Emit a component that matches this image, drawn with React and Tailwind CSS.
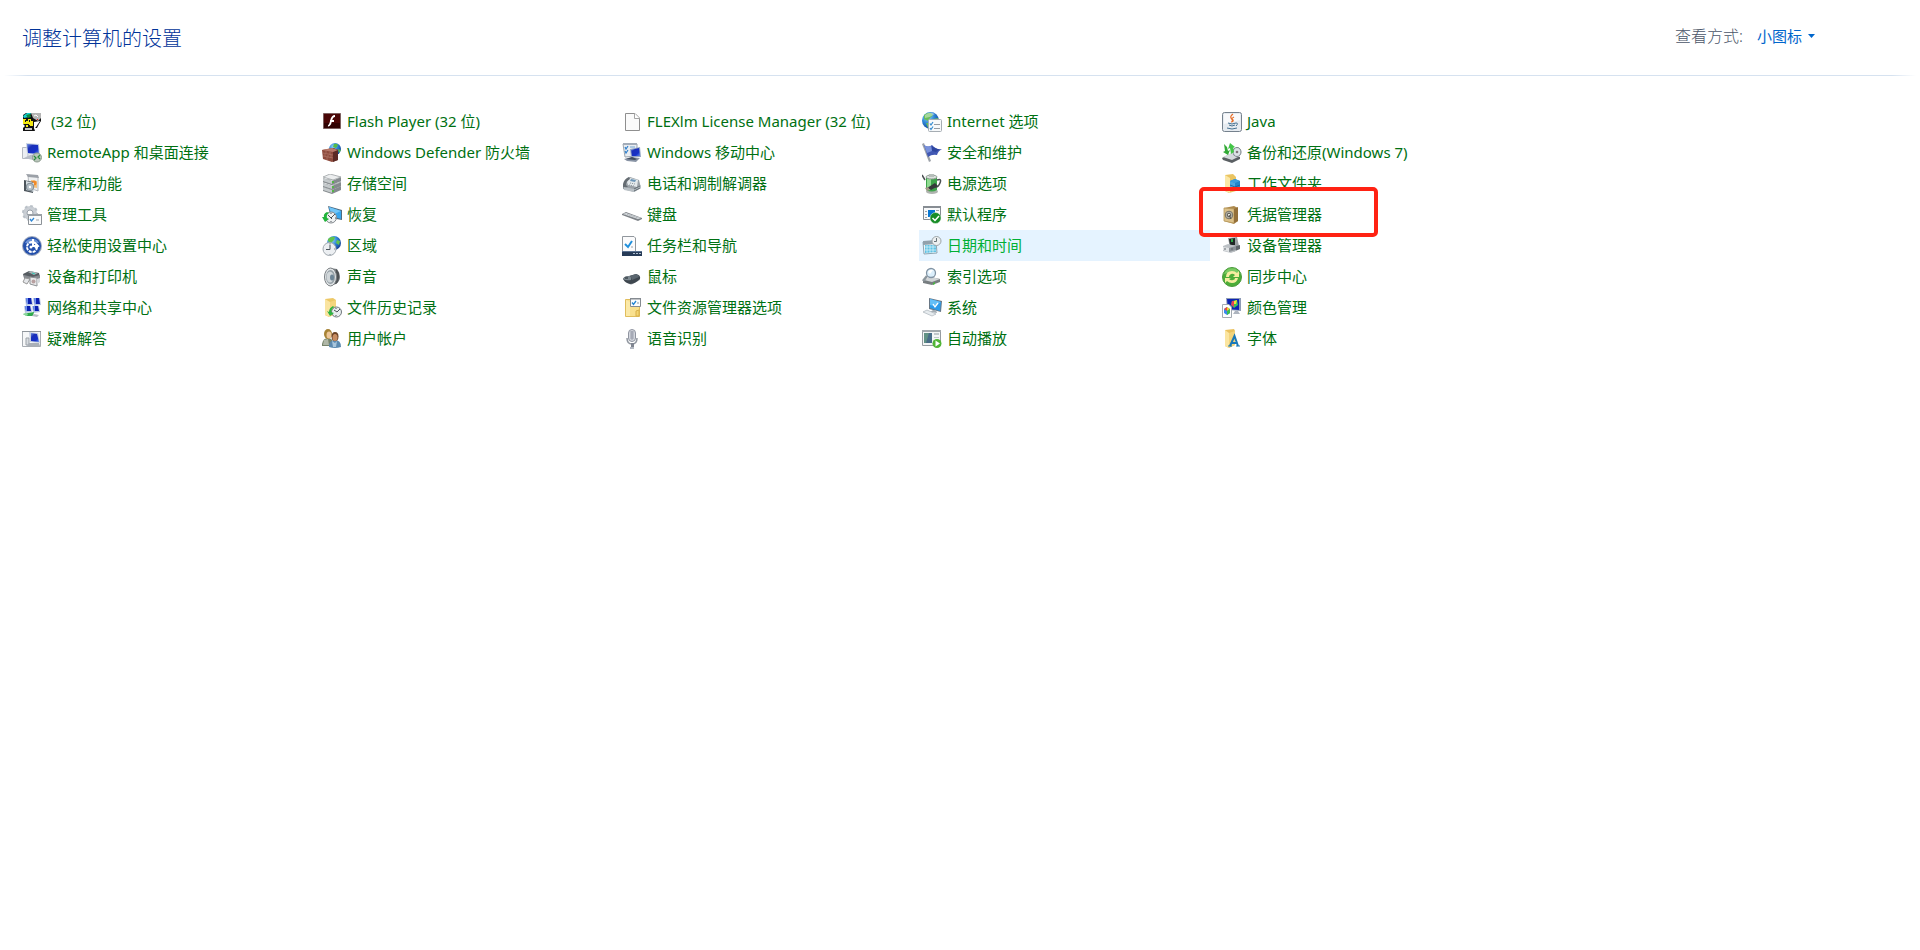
import { useState } from 'react';

const ICONS = {
  legacy: (
    <>
      <path d="M1 6V3L4 1H15L19 2V9L17 12L15 16H12L13 19H1V16L3 14L1 12Z" fill="#111" />
      <path d="M12 10L18 9L14 15L12 17Z" fill="#fff" />
      <path d="M1 4L5 1H9L7 5L2 6Z" fill="#19d0d0" />
      <path d="M4 3L8 2L9 5L6 6Z" fill="#118a3a" />
      <path d="M9 1H19V6L16 9L11 6Z" fill="#b5b5b5" />
      <path d="M12 4L14 3L16 5" stroke="#fff" fill="none" />
      <path d="M1 7H4V9H6V7H9V9H11V14H8V13H6V15H4V12H1Z" fill="#f4ea12" />
      <path d="M3 8H4V10H3ZM7 8H8V10H7ZM4 12H7V13H4Z" fill="#111" />
      <path d="M3 16H10V18H3Z" fill="#c9c9c9" />
      <path d="M15 7H16V8H15Z" fill="#e11" />
    </>
  ),
  remote: (
    <>
      <path d="M.5 4.500H6V15.500H.5Z" fill="#eceff3" stroke="#b5bac2" strokeWidth="1" />
      <path d="M4 0L17 1L18 13L5 11Z" fill="#c9d3e3" />
      <path d="M5 1L16 2L17 11L6 10Z" fill="url(#screen)" />
      <path d="M8 12H14V14L11 17L2 15L6 13Z" fill="#b8bec8" />
      <circle cx="15" cy="14.500" r="4.500" fill="#b9c7ba" stroke="#8d9b90" strokeWidth="1" />
      <path d="M12 13L14 15L12 17M18 12L16 14L18 16" stroke="#258a3a" strokeWidth="1.200" fill="none" />
    </>
  ),
  programs: (
    <>
      <path d="M6 1L16 3V17L7 14Z" fill="#eef0f2" stroke="#b7bbc0" strokeWidth="1" />
      <path d="M4 0L16 1L17 4L6 3Z" fill="#9ca1a8" />
      <path d="M9 6L15 7V14L9 13Z" fill="#f6c07c" />
      <circle cx="12" cy="9" r="2.500" fill="#ef8a2c" />
      <path d="M2 6L11 8V19L2 17Z" fill="#4c545b" />
      <path d="M4 7L12 9V18L4 16Z" fill="#d8e0e5" />
      <circle cx="8" cy="13" r="3.800" fill="#b4bfc7" stroke="#7f8a92" strokeWidth="1" />
      <circle cx="8" cy="13" r="1.200" fill="#fff" />
    </>
  ),
  admin: (
    <>
      <circle cx="8" cy="8" r="5" fill="none" stroke="#c9ced4" strokeWidth="4" />
      <circle cx="8" cy="8" r="7" fill="none" stroke="#bac1c8" strokeWidth="2" strokeDasharray="2.700 2.800" />
      <circle cx="8" cy="8" r="3" fill="#fff" stroke="#98a0a8" strokeWidth="1" />
      <path d="M6.500 9.500H19.500V19.500H6.500Z" fill="#fafbfc" stroke="#8c9298" strokeWidth="1" />
      <path d="M6 9H20V11H6Z" fill="#9aa0a6" />
      <path d="M8 14L9.500 16L12 13" stroke="#2d86d6" strokeWidth="1.300" fill="none" />
      <path d="M14 15H17" stroke="#9fa6ad" strokeWidth="1" />
    </>
  ),
  ease: (
    <>
      <circle cx="10" cy="10" r="10" fill="#9aa6bd" />
      <circle cx="10" cy="10" r="9" fill="#2450ac" />
      <path d="M3 7A8 8 0 0 1 17 7Q10 9 3 7Z" fill="#6d92d6" />
      <circle cx="10" cy="11" r="5" fill="none" stroke="#fff" strokeWidth="2" strokeDasharray="3 1" />
      <path d="M11 3V10H15M13 7L16 10L13 12" fill="none" stroke="#fff" strokeWidth="2" />
      <circle cx="9" cy="11" r="1.500" fill="#fff" />
    </>
  ),
  printers: (
    <>
      <path d="M1 7L7 4L17 6L18 10L10 12L2 11Z" fill="#565c61" />
      <path d="M6 5L9 4L16 6L12 8Z" fill="#aab4b6" />
      <path d="M2 8L10 10L18 8V12L10 14L2 12Z" fill="#85898e" />
      <path d="M10 6L13 7" stroke="#31c8b8" strokeWidth="1" />
      <path d="M3 11L8 12L5 17L1 15Z" fill="#e5e7ea" stroke="#999" strokeWidth="1" />
      <path d="M8 10L15 11V19L8 17Z" fill="#e9e9ea" stroke="#8e9296" strokeWidth="1" />
      <circle cx="11.500" cy="14.500" r="2" fill="#b8a0a0" />
      <path d="M15 12L18 11V15L15 17Z" fill="#d5d8db" />
    </>
  ),
  network: (
    <>
      <path d="M3 0L10 0L11 7L4 8ZM11 0L18 0L19 7L12 8ZM2 8L9 8L10 14L3 15ZM10 8L17 8L18 14L11 15Z" fill="#b8c6e2" />
      <path d="M4 0L9 0L10 6L5 6ZM12 0L17 0L18 6L13 6ZM3 8L8 8L9 13L4 13ZM11 8L16 8L17 13L12 13Z" fill="#0c20b0" />
      <path d="M4 0L6 0L6 6L5 6ZM12 0L14 0L14 6L13 6ZM3 8L5 8L5 13L4 13ZM11 8L13 8L13 13L12 13Z" fill="#6f93ee" />
      <path d="M1 16L6 15L12 14L11 18L5 18Z" fill="#2faa4c" />
      <path d="M1 16L5 15L6 17L4 18Z" fill="#8ad69a" />
      <path d="M12 16L17 17L15 19L10 18Z" fill="#b9bec5" />
    </>
  ),
  trouble: (
    <>
      <path d="M.5 2.500H18.500V17.500H.5Z" fill="#f6f7f8" stroke="#a8adb3" strokeWidth="1" />
      <path d="M0 2H19V3H0Z" fill="#8f959b" />
      <path d="M4 9H7V16H4Z" fill="#d8dce1" stroke="#9da3aa" strokeWidth="1" />
      <path d="M7 3L16 4L18 14L8 13Z" fill="#c6cfdf" />
      <path d="M9 4L15 5L17 13L9 12Z" fill="url(#screen)" />
      <path d="M7 14L17 14L18 17H5Z" fill="#aab0b8" />
    </>
  ),
  flash: (
    <>
      <path d="M1.500 1.500H18.500V16.500H1.500Z" fill="#4a0606" stroke="#7d6161" strokeWidth="1" />
      <path d="M2 11H18V16H2Z" fill="#310303" />
      <path d="M13 4Q10 4 9 9T6 13.500M8 9H12" fill="none" stroke="#fff" strokeWidth="1.800" />
    </>
  ),
  firewall: (
    <>
      <circle cx="13" cy="6" r="6" fill="url(#globe)" />
      <path d="M12 1Q15 0 16 2L14 5L11 4ZM16 6L19 7L17 10Z" fill="#55bd45" />
      <path d="M0 7L11 5L16 7V17L10 19L1 16Z" fill="#8d4a3c" />
      <path d="M11 5L16 7V17L11 19Z" fill="#5c2a24" />
      <path d="M0 7L10 5L16 7L11 9Z" fill="#b8796a" />
      <path d="M1 10L11 12M1 13L11 15M4 8V10M8 9V12M3 11V13M6 12V14M9 12V15M5 14V17" stroke="#b07568" strokeWidth=".7" />
    </>
  ),
  storage: (
    <>
      {[9, 5, 0].map((y) => (
        <g key={y}>
          <path d={`M1 ${y + 4}L10 ${y + 7}L19 ${y + 3}V${y + 7}L10 ${y + 11}L1 ${y + 8}Z`} fill="#858a8e" />
          <path d={`M1 ${y + 3}L8 ${y}L19 ${y + 3}L11 ${y + 6}Z`} fill="#eceeef" stroke="#9da2a5" strokeWidth=".8" />
          <path d={`M1 ${y + 4}L10 ${y + 7}V${y + 10}L1 ${y + 7}Z`} fill="#c4c9cb" />
          <path d={`M10 ${y + 7}H12V${y + 9}H10Z`} fill="#54b645" />
        </g>
      ))}
    </>
  ),
  recovery: (
    <>
      <path d="M6 1L20 5V15L9 13Z" fill="#4f6b80" />
      <path d="M7 2L19 6V14L9 11Z" fill="#39a7ee" />
      <path d="M7 2L19 6L10 10Z" fill="#71c5f7" />
      <circle cx="9" cy="12.500" r="5.500" fill="#eef1f2" stroke="#83898d" strokeWidth="1" />
      <path d="M6 10L10 14M9 13L13 9M9 8V9M9 16V17M13 13H14" stroke="#4c5358" strokeWidth="1" />
      <path d="M5 7Q1 9 2 12L0 12L3 17L7 14L5 13Q4 10 7 8Z" fill="#22b43b" />
    </>
  ),
  region: (
    <>
      <circle cx="12" cy="7" r="7" fill="url(#globe)" />
      <path d="M6 3Q9 0 13 1L12 4L9 7L6 5ZM15 4L18 5L17 9L14 7Z" fill="#62c34e" />
      <circle cx="7.500" cy="13" r="6.500" fill="#eceff2" stroke="#a1a8af" strokeWidth="1" />
      <path d="M8 8.500V13.500H4" fill="none" stroke="#4a535c" strokeWidth="1" />
      <path d="M8 7V8M13 13H12M8 19V18" stroke="#7c858e" strokeWidth="1" />
    </>
  ),
  sound: (
    <>
      <path d="M8 1L15 2Q18 6 18 10T14 17L8 19Z" fill="#777c80" />
      <path d="M14 2Q18 5 17 11T13 17Z" fill="#4d5154" />
      <ellipse cx="8.500" cy="10" rx="6" ry="9" fill="#e0e3e5" stroke="#797f83" strokeWidth="1" />
      <ellipse cx="8.500" cy="10" rx="4.500" ry="7" fill="#95a0a6" />
      <ellipse cx="8" cy="10" rx="3.500" ry="5.500" fill="#d1d7da" />
      <ellipse cx="10" cy="10.500" rx="2" ry="3" fill="#6d8596" />
    </>
  ),
  history: (
    <>
      <path d="M3 1L11 0L14 2V16L7 19L3 17Z" fill="#edc866" />
      <path d="M3 1L8 4V19L3 17Z" fill="#fae4a0" />
      <path d="M8 4L14 2V15L8 17Z" fill="#f4d57d" />
      <circle cx="14.500" cy="14" r="5" fill="#e8edef" stroke="#6f777c" strokeWidth="1" />
      <path d="M12 12L15 14L18 11M14 10V11M14 17V18" fill="none" stroke="#4a5358" strokeWidth="1" />
      <path d="M11 8Q7 10 7 14L5 13L8 18L12 15L9 14Q9 11 12 9Z" fill="#2db442" />
    </>
  ),
  users: (
    <>
      <path d="M0 15Q1 9 6 9T11 15V17H0Z" fill="#77846b" />
      <ellipse cx="6" cy="5" rx="4" ry="5" fill="#a78335" />
      <ellipse cx="7" cy="6" rx="2.500" ry="3.500" fill="#edc698" />
      <path d="M2 11L6 10L7 16H1Z" fill="#b0b7a7" />
      <path d="M7 18Q7 11 13 11T19 18Q13 20 7 18Z" fill="#5c8ab0" />
      <path d="M10 12L13 14L15 12L14 18H11Z" fill="#a9c6dc" />
      <ellipse cx="13" cy="7.500" rx="3.500" ry="4.500" fill="#6b4327" />
      <ellipse cx="13" cy="8.500" rx="2.500" ry="3.500" fill="#c88d62" />
    </>
  ),
  page: (
    <>
      <path d="M3.500 1.500H13L17.500 6V18.500H3.500Z" fill="#fbfbfb" stroke="#8f8f8f" strokeWidth="1" />
      <path d="M12.500 1.500V6.500H17.500" fill="#fff" stroke="#a5a5a5" strokeWidth="1" />
    </>
  ),
  mobility: (
    <>
      <path d="M1 1L15 1V13L3 14Z" fill="#e9edf2" stroke="#9ca5ae" strokeWidth="1" />
      <path d="M1 0H15V2H1Z" fill="#a3acb8" />
      <path d="M3 4L4 6L6 3M3 8L4 10L6 7" fill="none" stroke="#2f7fcb" strokeWidth="1.200" />
      <path d="M8 4H13" stroke="#72a5cf" strokeWidth="1" />
      <path d="M8 6L18 4L19 14L9 14Z" fill="#95a6c6" />
      <path d="M9 7L17 5L18 13L10 13Z" fill="url(#screen)" />
      <path d="M2 16L10 14L18 15L14 19L5 18Z" fill="#8893a4" />
      <path d="M4 16L10 14L15 16L13 17Z" fill="#414d5e" />
    </>
  ),
  phone: (
    <>
      <path d="M1 13L5 4L8 3L17 6L19 14L12 18L1 15Z" fill="#9aa1a7" />
      <path d="M5 8L8 4L16 6L15 13L6 11Z" fill="#e3e8eb" />
      <path d="M9 5L14 6L13 8L8 7Z" fill="#6d96b8" />
      <path d="M8 9L13 10M7 11L12 12" stroke="#8d969d" strokeWidth="1" strokeDasharray="1 1" />
      <path d="M1 10Q2 5 7 3L8 5Q4 7 4 11L6 13L3 14L1 13Z" fill="#656c72" />
      <path d="M2 13L12 15L19 11V14L12 18L2 16Z" fill="#b9c0c5" />
      <path d="M12 15L18 12M12 17L18 14" stroke="#606970" strokeWidth="1" />
    </>
  ),
  keyboard: (
    <>
      <path d="M0 9L4 7L20 13V14L16 16L0 10Z" fill="#7d8287" />
      <path d="M1 9L4 8L19 13L16 14Z" fill="#e4e7ea" />
      <path d="M3 9L16 13M5 9L17 13" stroke="#a0a7ac" strokeWidth=".7" strokeDasharray="1.500 .7" />
    </>
  ),
  taskbar: (
    <>
      <path d="M.5.5H12L13.500 2V16H.5Z" fill="#fbfbfc" stroke="#91979d" strokeWidth="1" />
      <path d="M3 8L6 11L10 5" fill="none" stroke="#2190dc" strokeWidth="2" />
      <path d="M9 11H11" stroke="#9aa3ab" strokeWidth="1" />
      <path d="M0 15H20V20H0Z" fill="#263b57" />
      <path d="M0 15H20V16H0Z" fill="#5a7190" />
      <path d="M11 17H13V18H11ZM14 17H16V18H14ZM17 17H19V18H17Z" fill="#aebed0" />
    </>
  ),
  mouse: (
    <>
      <path d="M2 14L9 18L18 13L18 11L8 13Z" fill="#c4c8cb" />
      <path d="M1 12Q2 9 7 9L14 7Q19 8 18 12Q13 17 8 17Q3 16 1 12Z" fill="#3e474f" />
      <path d="M1 12Q3 9 8 9Q10 11 9 13Q4 14 1 12Z" fill="#7d8991" />
      <path d="M8 9L14 7Q17 8 17 10L10 13Q10 11 8 9Z" fill="#5b6770" />
      <path d="M3 11L6 11" stroke="#1f262c" strokeWidth="1" />
    </>
  ),
  explorer: (
    <>
      <path d="M3.500 1.500L14 1.500L17.500 5V18.500H3.500Z" fill="#f9e08f" stroke="#e0bd5c" strokeWidth="1" />
      <path d="M4 2L8 4V18H4Z" fill="#fbe9a8" />
      <path d="M14 13V18H17V12Z" fill="#f4d572" stroke="#d8b04a" strokeWidth="1" />
      <path d="M8.500 .5H18.500V8.500H8.500Z" fill="#fbfcfd" stroke="#858b91" strokeWidth="1" />
      <path d="M8 0H19V1.500H8Z" fill="#858b91" />
      <path d="M10 4.500L11.500 6.500L14 3" fill="none" stroke="#2385d2" strokeWidth="1.300" />
      <path d="M15 5H17" stroke="#8d969e" strokeWidth="1" />
    </>
  ),
  mic: (
    <>
      <path d="M5 9Q5 15 10 15T15 9" fill="none" stroke="#9197a0" strokeWidth="1.500" />
      <rect x="6.500" y=".5" width="7" height="12" rx="3.500" fill="#d5d8df" stroke="#8f94a0" strokeWidth="1" />
      <path d="M8 3H12M8 5H12M8 7H12M8 9H12M10 2V11" stroke="#858b98" strokeWidth=".7" />
      <path d="M9 14H12V19H9Z" fill="#7f8590" />
      <path d="M8 18H12V20H8Z" fill="#b3b8c1" />
    </>
  ),
  internet: (
    <>
      <circle cx="8.500" cy="8.500" r="8.500" fill="url(#globe)" />
      <path d="M2 3Q6 0 9 1L11 3L8 6L6 9L2 7ZM11 7L16 6L15 10L12 11ZM4 11L8 11L9 14L6 16Z" fill="#69bd5a" />
      <path d="M3 3Q8 -1 13 2Q9 5 3 6Z" fill="#fff" opacity=".4" />
      <rect x="6.500" y="7.500" width="13" height="12" rx="1" fill="#f7f9fa" stroke="#a6adb3" strokeWidth="1" />
      <path d="M8 11.500L9 13L11 10M8 16L9 17.500L11 14.500" fill="none" stroke="#338bd0" strokeWidth="1.200" />
      <path d="M12 12.500H18M12 16.500H18" stroke="#949ca2" strokeWidth="1" />
    </>
  ),
  security: (
    <>
      <path d="M0 1L2 0L9 18L7 19Z" fill="#9ca1a8" />
      <path d="M2 2Q6 5 10 2Q14 7 20 6Q16 8 15 12Q10 11 6 14Z" fill="#4158b4" />
      <path d="M2 2Q6 5 9 3L10 8L5 10Z" fill="#7891dc" />
      <path d="M10 3Q14 7 18 6L14 9L10 8Z" fill="#2e469f" />
    </>
  ),
  power: (
    <>
      <ellipse cx="10" cy="17.500" rx="6" ry="2.500" fill="#b0b4b0" />
      <path d="M4 3H15V16Q10 19 4 16Z" fill="#3ea54c" />
      <path d="M5 5H9V16H5Z" fill="#91db91" />
      <ellipse cx="9.500" cy="3" rx="5.500" ry="2" fill="#dae1dc" stroke="#919a94" strokeWidth="1" />
      <path d="M7 0H12V3H7Z" fill="#b6beba" />
      <path d="M0 1L3 6M15 6Q20 4 18 9T13 13" fill="none" stroke="#4b5052" strokeWidth="1.500" />
      <path d="M5 14L13 9L16 12L9 16Z" fill="#353a3b" />
      <path d="M3 14L6 13L8 16L5 17Z" fill="#a59a89" />
    </>
  ),
  defaults: (
    <>
      <path d="M1.500 1.500H18.500V14.500H1.500Z" fill="#f8f9fa" stroke="#878d93" strokeWidth="1" />
      <path d="M1 1H19V3H1Z" fill="#878d93" />
      <path d="M3 6H5V7H3ZM3 9H5V10H3ZM3 12H5V13H3ZM14 5H17V6H14Z" fill="#9da3a8" />
      <path d="M6 5H13V12H6Z" fill="#0877d2" />
      <circle cx="13.500" cy="13" r="5.500" fill="#168c25" stroke="#e8f5e9" strokeWidth=".5" />
      <path d="M10.500 13L13 15.500L17 11" fill="none" stroke="#fff" strokeWidth="1.500" />
    </>
  ),
  date: (
    <>
      <path d="M1 6L14 5L15 17L2 18Z" fill="#edf6fa" stroke="#8da5b2" strokeWidth="1" />
      <path d="M1 5L14 4V8L1 9Z" fill="#91a1ac" />
      <path d="M3 9L14 9V16L3 17Z" fill="#5fc3e5" />
      <path d="M5 9V17M8 9V17M11 9V17M3 11H14M3 14H14" stroke="#e6f5fa" strokeWidth=".7" />
      <circle cx="14.500" cy="5" r="4.500" fill="#edf0f1" stroke="#9ca4a8" strokeWidth="1" />
      <path d="M14.500 2V5.500H12" fill="none" stroke="#687277" strokeWidth="1" />
    </>
  ),
  indexing: (
    <>
      <path d="M1 14L9 10L18 12V15L10 18L1 16Z" fill="#777d80" />
      <path d="M2 13L9 10L18 12L10 15Z" fill="#d2d6d8" />
      <path d="M11 16L13 15V17L11 18Z" fill="#48b740" />
      <path d="M5 9L1 14" stroke="#8c969c" strokeWidth="2.500" />
      <circle cx="9" cy="6" r="4.500" fill="#dceffb" stroke="#8294a4" strokeWidth="1.300" />
      <path d="M6 5Q8 2 11 3L8 7Z" fill="#fff" />
    </>
  ),
  system: (
    <>
      <path d="M7 0L20 3L19 14L7 11Z" fill="#687785" />
      <path d="M8 1L19 4L18 13L8 10Z" fill="#2d9be9" />
      <path d="M8 1L19 4L12 8L8 7Z" fill="#64bff7" />
      <path d="M11 6L13 9L16 5" fill="none" stroke="#fff" strokeWidth="1.300" />
      <path d="M11 12H14L15 15L8 14Z" fill="#a4adb4" />
      <path d="M1 14L5 12L14 16L10 18Z" fill="#e7ecef" stroke="#b2bac0" strokeWidth=".8" />
    </>
  ),
  autoplay: (
    <>
      <path d="M.5 1.500H18.500V16.500H.5Z" fill="#f4f5f6" stroke="#969ca1" strokeWidth="1" />
      <path d="M0 1H19V3H0Z" fill="#a2a8ad" />
      <path d="M2 4H10V14H2Z" fill="#486c87" />
      <path d="M2 4H7L4 14H2Z" fill="#619184" />
      <path d="M12 4H17V6H12ZM12 8H17V9H12Z" fill="#c1c7cb" />
      <circle cx="15" cy="14.500" r="4.500" fill="#50b536" />
      <path d="M13.500 11.500L18 14.500L13.500 17.500Z" fill="#fff" />
    </>
  ),
  java: (
    <>
      <rect x=".5" y=".5" width="19" height="19" rx="2" fill="#e6ebf0" stroke="#75818d" strokeWidth="1" />
      <path d="M2 2H18V8L2 12Z" fill="#f8f9fb" />
      <path d="M11 2Q7 5 10 7T9 10M12 5Q8 7 11 9" fill="none" stroke="#e66d28" strokeWidth="1.200" />
      <path d="M6 11Q10 13 14 11M7 13Q10 15 13 13M14 11Q17 11 14 14M5 16Q10 18 15 16" fill="none" stroke="#477291" strokeWidth="1" />
    </>
  ),
  backup: (
    <>
      <path d="M0 15L8 11L18 14V16L10 20L1 17Z" fill="#5a5f63" />
      <path d="M1 14L9 10L18 13L10 17Z" fill="#d4d9dc" />
      <path d="M10 6L16 4Q20 6 19 11L12 13Z" fill="#a2a9ae" />
      <ellipse cx="15" cy="9" rx="4" ry="4.500" fill="#dce3e7" stroke="#7d858b" strokeWidth="1" />
      <circle cx="15" cy="9" r="1.300" fill="#81757b" />
      <path d="M2 1L5 4L6 8L8 7L6 12L1 9L3 8Z" fill="#33aa37" />
      <path d="M9 11L8 5L6 6L8 0L13 4L11 5L12 9Z" fill="#44c548" />
    </>
  ),
  work: (
    <>
      <path d="M3 1L11 0L14 3V17L7 19L3 17Z" fill="#eac461" />
      <path d="M3 1L8 4V19L3 17Z" fill="#fbe7a5" />
      <path d="M8 7L13 5L18 7V15L13 17L8 15Z" fill="#2285c7" />
      <path d="M8 7L13 9V17L8 15Z" fill="#4ba7dd" />
      <path d="M8 7L13 5L18 7L13 9Z" fill="#3a9ddb" />
      <path d="M8 11L13 13L18 11" fill="none" stroke="#155a91" strokeWidth=".8" />
    </>
  ),
  credential: (
    <>
      <path d="M2 3L12 1L16 3V16L12 19L2 16Z" fill="#ae8a4d" />
      <path d="M2 3L12 4V18L2 16Z" fill="#dcc18a" stroke="#b8995c" strokeWidth=".8" />
      <path d="M12 4L16 2V16L12 18Z" fill="#94703a" />
      <circle cx="7" cy="10" r="3.800" fill="#bbb9ae" stroke="#777366" strokeWidth="1" />
      <circle cx="7" cy="10" r="1.800" fill="#e8e6dc" stroke="#57564f" strokeWidth="1" />
      <path d="M7 10L9 14" stroke="#525149" strokeWidth="1" />
    </>
  ),
  devices: (
    <>
      <path d="M6 2L15 1L17 10L8 12Z" fill="#9ca0a3" />
      <path d="M7 3L13 2V9L8 9Z" fill="#202725" />
      <path d="M9 3H11V6H9Z" fill="#2ca746" />
      <path d="M8 12L18 9V13L11 16Z" fill="#5e6468" />
      <path d="M1 10L6 8L14 10V15L9 17L1 15Z" fill="#bcc1c5" />
      <path d="M1 11L7 12V16L1 14Z" fill="#e1e4e6" />
      <path d="M7 12L14 10V14L7 16Z" fill="#8c9297" />
      <path d="M3 12V14M10 12V14" stroke="#60676d" strokeWidth="1" />
    </>
  ),
  sync: (
    <>
      <circle cx="10" cy="10" r="9.500" fill="#4cad38" stroke="#4a9a3c" strokeWidth="1" />
      <path d="M2 7A8.500 8.500 0 0 1 18 7Q10 4 2 7Z" fill="#7acb64" />
      <path d="M4 10Q4 4 10 4Q13 4 15 6L17 4V10H11L13 8Q11 6 9 7Q7 8 7 10Z" fill="#f5eda0" />
      <path d="M16 11Q15 16 10 16Q7 16 5 14L3 16V11H9L7 12Q9 14 11 13Q13 13 13 11Z" fill="#f5eda0" />
    </>
  ),
  color: (
    <>
      <path d="M4 0H19V13L5 12Z" fill="#8e9cb6" />
      <path d="M5 1H17V12L6 11Z" fill="#0d23b3" />
      <path d="M10 3L15 2L16 7L12 10L9 7Z" fill="#37c35a" />
      <path d="M10 3L12 3L12 9L9 7Z" fill="#e33f5d" />
      <path d="M12 3L15 2L14 6H12Z" fill="#f4df33" />
      <path d="M13 13H16L18 16H11Z" fill="#aeb5bf" />
      <path d="M.5 6.500H7L9.500 9V19.500H.5Z" fill="#fff" stroke="#a4abb2" strokeWidth="1" />
      <path d="M5 9L8 11V15L5 17L2 15V11Z" fill="#3c8af0" />
      <path d="M5 9L8 11L5 13Z" fill="#f5d422" />
      <path d="M5 9L2 11L5 13Z" fill="#ef4b3a" />
      <path d="M5 13L8 11V15L5 17Z" fill="#3ec04c" />
    </>
  ),
  fonts: (
    <>
      <path d="M3 1L12 0L13 2V16L7 19L3 17Z" fill="#eac260" />
      <path d="M3 1L7 4V19L3 17Z" fill="#fbe5a0" />
      <path d="M7 4L13 2V16L7 18Z" fill="#f3d47c" />
      <path d="M8 17L12.500 7L16 17M9.500 14H15" fill="none" stroke="#1b78b8" strokeWidth="2" />
      <path d="M6 17H10M14 17H18" stroke="#1b78b8" strokeWidth="1" />
    </>
  ),
};

const ITEMS = [
  { icon: 'legacy', label: ' (32 位)' },
  { icon: 'flash', label: 'Flash Player (32 位)' },
  { icon: 'page', label: 'FLEXlm License Manager (32 位)' },
  { icon: 'internet', label: 'Internet 选项' },
  { icon: 'java', label: 'Java' },
  { icon: 'remote', label: 'RemoteApp 和桌面连接' },
  { icon: 'firewall', label: 'Windows Defender 防火墙' },
  { icon: 'mobility', label: 'Windows 移动中心' },
  { icon: 'security', label: '安全和维护' },
  { icon: 'backup', label: '备份和还原(Windows 7)' },
  { icon: 'programs', label: '程序和功能' },
  { icon: 'storage', label: '存储空间' },
  { icon: 'phone', label: '电话和调制解调器' },
  { icon: 'power', label: '电源选项' },
  { icon: 'work', label: '工作文件夹' },
  { icon: 'admin', label: '管理工具' },
  { icon: 'recovery', label: '恢复' },
  { icon: 'keyboard', label: '键盘' },
  { icon: 'defaults', label: '默认程序' },
  { icon: 'credential', label: '凭据管理器', marked: true },
  { icon: 'ease', label: '轻松使用设置中心' },
  { icon: 'region', label: '区域' },
  { icon: 'taskbar', label: '任务栏和导航' },
  { icon: 'date', label: '日期和时间' },
  { icon: 'devices', label: '设备管理器' },
  { icon: 'printers', label: '设备和打印机' },
  { icon: 'sound', label: '声音' },
  { icon: 'mouse', label: '鼠标' },
  { icon: 'indexing', label: '索引选项' },
  { icon: 'sync', label: '同步中心' },
  { icon: 'network', label: '网络和共享中心' },
  { icon: 'history', label: '文件历史记录' },
  { icon: 'explorer', label: '文件资源管理器选项' },
  { icon: 'system', label: '系统' },
  { icon: 'color', label: '颜色管理' },
  { icon: 'trouble', label: '疑难解答' },
  { icon: 'users', label: '用户帐户' },
  { icon: 'mic', label: '语音识别' },
  { icon: 'autoplay', label: '自动播放' },
  { icon: 'fonts', label: '字体' },
];

// Gradients shared by several icons
function IconDefs() {
  return (
    <svg className="absolute h-0 w-0" aria-hidden="true">
      <defs>
        <linearGradient id="screen" x1="0" y1="0" x2="1" y2="1">
          <stop offset="0" stopColor="#6f8fe0" />
          <stop offset=".3" stopColor="#1a2fb8" />
          <stop offset=".7" stopColor="#1530c8" />
          <stop offset="1" stopColor="#5f8cf0" />
        </linearGradient>
        <radialGradient id="globe" cx=".35" cy=".3" r=".75">
          <stop offset="0" stopColor="#8fd4f7" />
          <stop offset=".5" stopColor="#2f86d6" />
          <stop offset="1" stopColor="#123f94" />
        </radialGradient>
      </defs>
    </svg>
  );
}

function Item({ item, active, onHover }) {
  return (
    <li className="relative">
      <a
        href="#"
        onMouseEnter={onHover}
        className={`flex h-[31px] items-center gap-[5px] pl-[3px] text-[15px] whitespace-pre ${
          active ? 'bg-[#e5f3ff] text-[#00b034]' : 'text-[#007012]'
        }`}
      >
        <svg viewBox="0 0 20 20" className="h-5 w-5 shrink-0" aria-hidden="true">
          {ICONS[item.icon]}
        </svg>
        <span>{item.label}</span>
      </a>
      {item.marked && (
        <div className="pointer-events-none absolute -top-3 -left-5 z-10 h-[50px] w-[179px] rounded-[5px] border-4 border-[#ff2213]" />
      )}
    </li>
  );
}

export default function App() {
  const [hovered, setHovered] = useState('date');

  return (
    <div className="min-h-screen bg-white font-['Noto_Sans','Noto_Sans_CJK_SC',sans-serif]">
      <IconDefs />

      {/* Header */}
      <header className="flex h-[75px] items-start justify-between pr-[105px] pl-[22px]">
        <h1 className="pt-[25px] text-xl leading-7 font-light text-[#003399]">调整计算机的设置</h1>
        <div className="flex items-center pt-6">
          <label htmlFor="view" className="mr-[14px] text-base leading-6 font-light text-[#4a5568]">
            查看方式:
          </label>
          <select
            id="view"
            defaultValue="small"
            className="w-[45px] appearance-none bg-transparent text-[15px] leading-6 text-[#0066cc] outline-none"
          >
            <option value="category">类别</option>
            <option value="large">大图标</option>
            <option value="small">小图标</option>
          </select>
          <svg viewBox="0 0 7 4" className="ml-[6px] h-1 w-[7px]" aria-hidden="true">
            <path d="M0 0H7L3.500 4Z" fill="#0066cc" />
          </svg>
        </div>
      </header>
      <div className="mx-1 h-px bg-[linear-gradient(to_right,transparent,#d6e2f0_24px,#d6e2f0_calc(100%-24px),transparent)]" />

      {/* Applets */}
      <main className="pt-[30px] pl-[19px]">
        <ul className="grid w-full max-w-[1491px] grid-cols-5 gap-x-[9px]">
          {ITEMS.map((item) => (
            <Item
              key={item.icon}
              item={item}
              active={hovered === item.icon}
              onHover={() => setHovered(item.icon)}
            />
          ))}
        </ul>
      </main>
    </div>
  );
}
